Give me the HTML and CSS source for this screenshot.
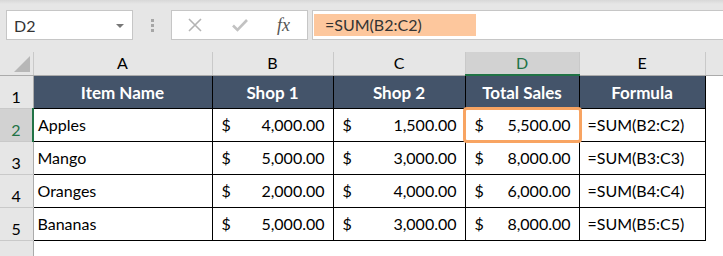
FILE: index.html
```html
<!DOCTYPE html>
<html lang="en">
<head>
    <meta charset="UTF-8">
    <title>Total Sales</title>
    <link rel="stylesheet" href="styles.css">
</head>
<body>

    <!-- Formula bar -->
    <div class="toolbar">
        <div class="name-box">
            <span>D2</span>
            <span class="drop-arrow"></span>
        </div>
        <div class="grip"><i></i><i></i><i></i></div>
        <div class="fx-buttons">
            <svg class="btn-icon" width="16" height="16" viewBox="0 0 16 16">
                <path d="M2 2 L14 14 M14 2 L2 14" stroke="#b4b4b4" stroke-width="1.6" fill="none"/>
            </svg>
            <svg class="btn-icon" width="18" height="16" viewBox="0 0 18 16">
                <path d="M2 8.5 L6.5 13 L16 3" stroke="#c2c2c2" stroke-width="2.6" fill="none"/>
            </svg>
            <span class="fx">fx</span>
        </div>
        <div class="formula-input">
            <span class="formula-hl">=SUM(B2:C2)</span>
        </div>
    </div>

    <!-- Sheet -->
    <table class="sheet">
        <colgroup>
            <col class="c-row">
            <col class="c-a">
            <col class="c-b">
            <col class="c-c">
            <col class="c-d">
            <col class="c-e">
            <col>
        </colgroup>
        <tr class="col-heads">
            <th class="corner"><span class="tri"></span></th>
            <th>A</th>
            <th>B</th>
            <th>C</th>
            <th class="active">D</th>
            <th>E</th>
            <th class="blank"></th>
        </tr>
        <tr class="head-row">
            <th class="row-num">1</th>
            <td>Item Name</td>
            <td>Shop 1</td>
            <td>Shop 2</td>
            <td>Total Sales</td>
            <td>Formula</td>
            <td class="empty"></td>
        </tr>
        <tr>
            <th class="row-num active">2</th>
            <td class="item">Apples</td>
            <td class="money"><span>$</span><span>4,000.00</span></td>
            <td class="money"><span>$</span><span>1,500.00</span></td>
            <td class="money selected"><span>$</span><span>5,500.00</span></td>
            <td class="formula">=SUM(B2:C2)</td>
            <td class="empty"></td>
        </tr>
        <tr>
            <th class="row-num">3</th>
            <td class="item">Mango</td>
            <td class="money"><span>$</span><span>5,000.00</span></td>
            <td class="money"><span>$</span><span>3,000.00</span></td>
            <td class="money"><span>$</span><span>8,000.00</span></td>
            <td class="formula">=SUM(B3:C3)</td>
            <td class="empty"></td>
        </tr>
        <tr>
            <th class="row-num">4</th>
            <td class="item">Oranges</td>
            <td class="money"><span>$</span><span>2,000.00</span></td>
            <td class="money"><span>$</span><span>4,000.00</span></td>
            <td class="money"><span>$</span><span>6,000.00</span></td>
            <td class="formula">=SUM(B4:C4)</td>
            <td class="empty"></td>
        </tr>
        <tr>
            <th class="row-num">5</th>
            <td class="item">Bananas</td>
            <td class="money"><span>$</span><span>5,000.00</span></td>
            <td class="money"><span>$</span><span>3,000.00</span></td>
            <td class="money"><span>$</span><span>8,000.00</span></td>
            <td class="formula">=SUM(B5:C5)</td>
            <td class="empty"></td>
        </tr>
        <tr class="spare">
            <th class="row-num"></th>
            <td></td><td></td><td></td><td></td><td></td><td></td>
        </tr>
    </table>

</body>
</html>
```

FILE: styles.css
```css
* {
    margin: 0;
    padding: 0;
    box-sizing: border-box;
}

body {
    font-family: 'Lato', 'Liberation Sans', sans-serif;
    background-color: #fff;
    width: 723px;
    height: 256px;
    overflow: hidden;
    color: #000;
}

/* Formula bar */
.toolbar {
    height: 52px;
    background: linear-gradient(#d8d8d8 0, #e6e6e6 4px);
    display: flex;
    align-items: flex-start;
    padding-top: 10px;
    padding-left: 6px;
}

.name-box {
    width: 127px;
    height: 30px;
    background-color: #fff;
    border: 1px solid #c6c6c6;
    display: flex;
    align-items: center;
    justify-content: space-between;
    padding: 0 8px 0 7px;
    font-size: 16px;
    color: #333;
}

.drop-arrow {
    width: 0;
    height: 0;
    border-left: 4px solid transparent;
    border-right: 4px solid transparent;
    border-top: 4px solid #777;
    margin-top: 1px;
}

.grip {
    width: 38px;
    height: 30px;
    display: flex;
    flex-direction: column;
    align-items: center;
    justify-content: center;
    gap: 2px;
}

.grip i {
    display: block;
    width: 3px;
    height: 3px;
    background-color: #a6a6a6;
}

.fx-buttons {
    width: 137px;
    height: 30px;
    background-color: #fff;
    border: 1px solid #c6c6c6;
    display: flex;
    align-items: center;
    padding-left: 15px;
    gap: 28px;
}

.fx {
    font-family: 'Liberation Serif', serif;
    font-style: italic;
    font-size: 18px;
    color: #555;
}

.formula-input {
    flex: 1;
    height: 30px;
    margin-left: 4px;
    background-color: #fff;
    border: 1px solid #c6c6c6;
    border-right: none;
    padding: 3px 0 0 1px;
}

.formula-hl {
    display: inline-block;
    width: 162px;
    height: 22px;
    line-height: 22px;
    background-color: #fdc79d;
    padding-left: 11px;
    font-size: 16px;
    color: #333;
}

/* Sheet grid */
.sheet {
    border-collapse: collapse;
    table-layout: fixed;
    width: 723px;
}

.c-row { width: 33px; }
.c-a { width: 179px; }
.c-b { width: 121px; }
.c-c { width: 132px; }
.c-d { width: 114px; }
.c-e { width: 126px; }

.col-heads th {
    height: 23px;
    background-color: #e6e6e6;
    font-weight: normal;
    font-size: 16px;
    border-right: 1px solid #c9c9c9;
    border-bottom: 1px solid #ababab;
    line-height: 1;
}

.col-heads th.active {
    background-color: #d2d2d2;
    color: #217346;
    border-bottom: 2px solid #217346;
}

.col-heads th.blank {
    border-right: none;
}

.corner {
    position: relative;
}

.corner .tri {
    position: absolute;
    right: 3px;
    bottom: 3px;
    width: 0;
    height: 0;
    border-left: 16px solid transparent;
    border-bottom: 16px solid #b7b7b7;
}

.row-num {
    height: 33px;
    background-color: #e6e6e6;
    font-weight: normal;
    font-size: 16px;
    vertical-align: bottom;
    padding-bottom: 2px;
    border-right: 1px solid #ababab;
    border-bottom: 1px solid #c9c9c9;
}

.row-num.active {
    background-color: #d2d2d2;
    color: #217346;
    border-right: 2px solid #217346;
}

td {
    font-size: 16px;
    border: 1px solid #000;
    white-space: nowrap;
}

td.empty {
    border: none;
    border-left: 1px solid #000;
}

.spare .row-num {
    height: 16px;
}

.spare td {
    border: none;
    border-top: 1px solid #000;
}

.spare td:last-child {
    border-top: none;
}

.head-row td {
    background-color: #44546a;
    color: #fff;
    font-weight: bold;
    font-size: 17px;
    text-align: center;
    padding-top: 1px;
}

.head-row td.empty {
    background-color: #fff;
}

.item {
    padding-left: 4px;
}

.formula {
    padding-left: 8px;
}

.money {
    padding: 0 8px 0 9px;
}

.money span:first-child {
    float: left;
}

.money span:last-child {
    float: right;
}

.money.selected {
    position: relative;
}

.money.selected::after {
    content: "";
    position: absolute;
    top: -2px;
    left: -3px;
    right: -3px;
    bottom: -2px;
    border: 3px solid #f8a462;
    border-radius: 4px;
}
```
